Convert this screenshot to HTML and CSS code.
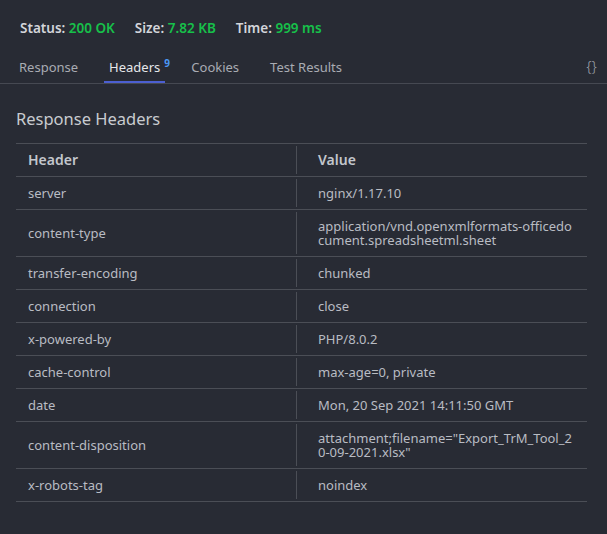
FILE: index.html
```html
<!DOCTYPE html>
<html lang="en">
<head>
<meta charset="utf-8">
<title>Response Headers</title>
<link rel="stylesheet" href="styles.css">
</head>
<body>
<div class="status-bar">
  <span class="stat">Status: <span class="ok">200 OK</span></span>
  <span class="stat">Size: <span class="ok">7.82 KB</span></span>
  <span class="stat">Time: <span class="ok">999 ms</span></span>
</div>
<div class="tabs">
  <div class="tab">Response</div>
  <div class="tab active">Headers<sup class="badge">9</sup></div>
  <div class="tab">Cookies</div>
  <div class="tab">Test Results</div>
  <div class="tab-spacer"></div>
  <div class="braces">{}</div>
</div>
<div class="content">
  <h2 class="title">Response Headers</h2>
  <div class="table">
    <div class="row head"><div class="cell key">Header</div><div class="cell val">Value</div></div>
    <div class="row"><div class="cell key">server</div><div class="cell val">nginx/1.17.10</div></div>
    <div class="row"><div class="cell key">content-type</div><div class="cell val">application/vnd.openxmlformats-officedocument.spreadsheetml.sheet</div></div>
    <div class="row"><div class="cell key">transfer-encoding</div><div class="cell val">chunked</div></div>
    <div class="row"><div class="cell key">connection</div><div class="cell val">close</div></div>
    <div class="row"><div class="cell key">x-powered-by</div><div class="cell val">PHP/8.0.2</div></div>
    <div class="row"><div class="cell key">cache-control</div><div class="cell val">max-age=0, private</div></div>
    <div class="row"><div class="cell key">date</div><div class="cell val">Mon, 20 Sep 2021 14:11:50 GMT</div></div>
    <div class="row"><div class="cell key">content-disposition</div><div class="cell val">attachment;filename="Export_TrM_Tool_20-09-2021.xlsx"</div></div>
    <div class="row"><div class="cell key">x-robots-tag</div><div class="cell val">noindex</div></div>
  </div>
</div>
</body>
</html>
```
FILE: styles.css
```css
html, body {
  margin: 0;
  padding: 0;
  background: #282b34;
  height: 100%;
}
body {
  font-family: "Noto Sans", "Open Sans", sans-serif;
  color: #b9bcc3;
  font-size: 13px;
}
.status-bar {
  display: flex;
  gap: 20px;
  padding: 18px 20px 0 20px;
  height: 20px;
  font-size: 13.5px;
  font-weight: 600;
  color: #d3d5da;
  line-height: 20px;
}
.ok {
  color: #17c04a;
}
.tabs {
  display: flex;
  align-items: flex-end;
  gap: 21px;
  padding: 0 10px 0 14px;
  margin-top: 20px;
  border-bottom: 1px solid #464952;
  height: 25px;
}
.tab {
  position: relative;
  padding: 0 5px;
  height: 23px;
  line-height: 18px;
  color: #a9acb3;
  border-bottom: 2px solid transparent;
  white-space: nowrap;
}
.tab.active {
  color: #e6e7ea;
  border-bottom-color: #4c5fd1;
}
.badge {
  position: absolute;
  left: calc(100% - 1px);
  top: 0;
  color: #4b98f5;
  font-size: 10px;
  font-weight: 700;
  line-height: 10px;
}
.tab-spacer {
  flex: 1;
}
.braces {
  height: 26px;
  line-height: 18px;
  color: #9a9da4;
  font-size: 15px;
  font-weight: 300;
  letter-spacing: 0;
}
.content {
  padding: 0 20px 0 16px;
}
.title {
  margin: 23px 0 12px 0;
  font-size: 16.5px;
  font-weight: 400;
  line-height: 24px;
  color: #c9cbd0;
}
.table {
  border-top: 1px solid #4b4e56;
}
.row {
  display: grid;
  grid-template-columns: 280px 1fr;
  border-bottom: 1px solid #4b4e56;
}
.cell {
  display: flex;
  align-items: center;
  padding: 9px 12px;
  line-height: 14px;
}
.val {
  border-left: 1px solid #4b4e56;
  margin: 2px 0;
  padding: 7px 12px 7px 21px;
  word-break: break-all;
}
.head .cell {
  font-size: 14px;
  font-weight: 600;
  color: #c3c6cc;
}
```
